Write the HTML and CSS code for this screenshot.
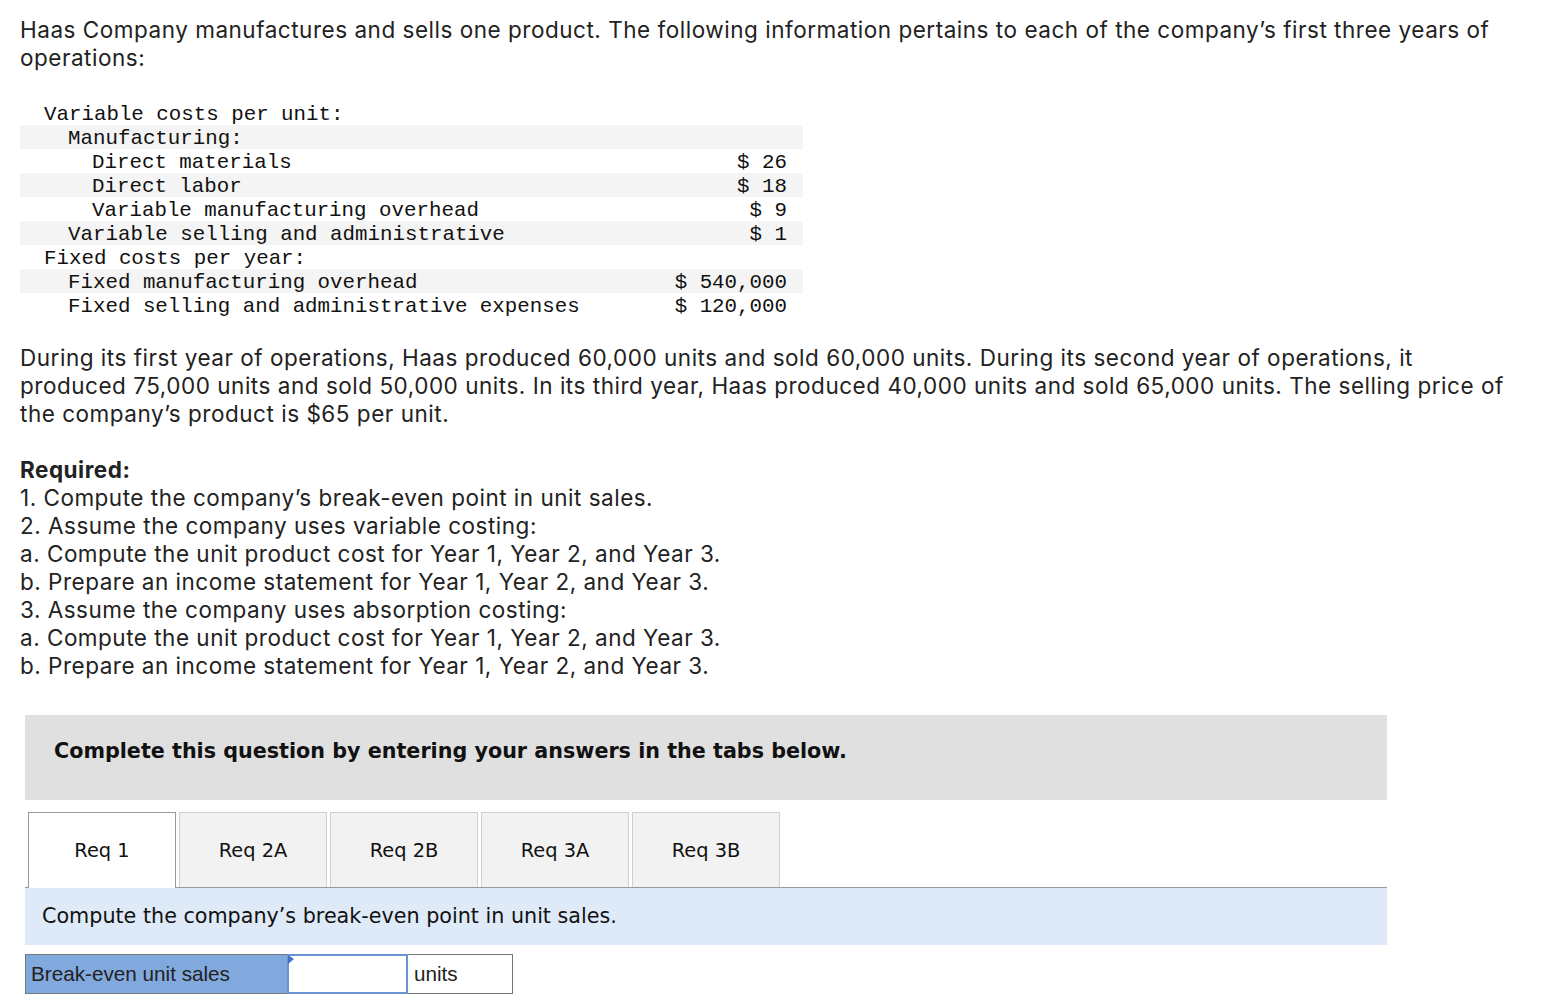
FILE: index.html
```html
<!DOCTYPE html>
<html>
<head>
<meta charset="utf-8">
<link rel="stylesheet" href="styles.css">
</head>
<body>
<div class="page">
  <p class="para">Haas Company manufactures and sells one product. The following information pertains to each of the company’s first three years of<br>operations:</p>

  <table class="costs">
    <tr><td class="l0">Variable costs per unit:</td><td class="val"></td></tr>
    <tr class="shade"><td class="l1">Manufacturing:</td><td class="val"></td></tr>
    <tr><td class="l2">Direct materials</td><td class="val">$ 26</td></tr>
    <tr class="shade"><td class="l2">Direct labor</td><td class="val">$ 18</td></tr>
    <tr><td class="l2">Variable manufacturing overhead</td><td class="val">$ 9</td></tr>
    <tr class="shade"><td class="l1">Variable selling and administrative</td><td class="val">$ 1</td></tr>
    <tr><td class="l0">Fixed costs per year:</td><td class="val"></td></tr>
    <tr class="shade"><td class="l1">Fixed manufacturing overhead</td><td class="val">$ 540,000</td></tr>
    <tr><td class="l1">Fixed selling and administrative expenses</td><td class="val">$ 120,000</td></tr>
  </table>

  <p class="para para2">During its first year of operations, Haas produced 60,000 units and sold 60,000 units. During its second year of operations, it<br>produced 75,000 units and sold 50,000 units. In its third year, Haas produced 40,000 units and sold 65,000 units. The selling price of<br>the company’s product is $65 per unit.</p>

  <div class="required">
    <div class="req-title">Required:</div>
    <div>1. Compute the company’s break-even point in unit sales.</div>
    <div>2. Assume the company uses variable costing:</div>
    <div>a. Compute the unit product cost for Year 1, Year 2, and Year 3.</div>
    <div>b. Prepare an income statement for Year 1, Year 2, and Year 3.</div>
    <div>3. Assume the company uses absorption costing:</div>
    <div>a. Compute the unit product cost for Year 1, Year 2, and Year 3.</div>
    <div>b. Prepare an income statement for Year 1, Year 2, and Year 3.</div>
  </div>

  <div class="instruct">Complete this question by entering your answers in the tabs below.</div>

  <div class="tabs">
    <div class="tab active">Req 1</div>
    <div class="tab">Req 2A</div>
    <div class="tab">Req 2B</div>
    <div class="tab">Req 3A</div>
    <div class="tab">Req 3B</div>
  </div>

  <div class="panel">Compute the company’s break-even point in unit sales.</div>

  <div class="answer">
    <div class="ans-label">Break-even unit sales</div>
    <div class="ans-input"><span class="flag"></span></div>
    <div class="ans-unit">units</div>
  </div>
</div>
</body>
</html>
```

FILE: styles.css
```css
html, body {
  margin: 0;
  padding: 0;
  background: #ffffff;
}
.page {
  padding: 16px 0 0 20px;
  color: #222;
  font-family: Inter, "Open Sans", sans-serif;
}
.para {
  margin: 0;
  font-size: 22.5px;
  letter-spacing: 0.52px;
  line-height: 28px;
  white-space: nowrap;
}
.costs {
  margin-top: 29px;
  border-collapse: collapse;
  width: 783px;
  font-family: "Liberation Mono", monospace;
  font-size: 20.8px;
  color: #111;
}
.costs td {
  height: 24px;
  box-sizing: border-box;
  padding: 3px 0 0;
  line-height: 21px;
  white-space: pre;
}
.costs .shade td {
  background: #f4f4f4;
}
.costs .l0 { padding-left: 24px; }
.costs .l1 { padding-left: 48px; }
.costs .l2 { padding-left: 72px; }
.costs .val {
  text-align: right;
  padding-right: 16px;
}
.para2 {
  margin-top: 27px;
}
.required {
  margin-top: 28px;
  font-size: 22.5px;
  letter-spacing: 0.5px;
  line-height: 28px;
}
.req-title {
  font-weight: bold;
}
.instruct {
  margin-top: 35px;
  margin-left: 5px;
  width: 1362px;
  height: 85px;
  box-sizing: border-box;
  background: #e0e0e0;
  padding: 24px 0 0 29px;
  font-family: "DejaVu Sans", Verdana, sans-serif;
  font-weight: bold;
  font-size: 20.7px;
  color: #111;
}
.tabs {
  margin-top: 12px;
  margin-left: 5px;
  width: 1362px;
  display: flex;
  gap: 3px;
  padding-left: 3px;
  box-sizing: border-box;
  border-bottom: 1px solid #999;
}
.tab {
  width: 148px;
  height: 75px;
  box-sizing: border-box;
  background: #f2f2f2;
  border: 1px solid #cfcfcf;
  border-bottom: none;
  display: flex;
  align-items: center;
  justify-content: center;
  font-family: "DejaVu Sans", Verdana, sans-serif;
  font-size: 19.4px;
  color: #111;
}
.tab.active {
  background: #fff;
  border-color: #999;
  margin-bottom: -1px;
  height: 76px;
}
.panel {
  margin-left: 5px;
  width: 1362px;
  height: 57px;
  box-sizing: border-box;
  background: #deeaf8;
  padding: 16px 0 0 17px;
  font-family: "DejaVu Sans", Verdana, sans-serif;
  font-size: 20.7px;
  color: #111;
}
.answer {
  margin-top: 9px;
  margin-left: 5px;
  display: flex;
  height: 40px;
  font-family: "Liberation Sans", Arial, sans-serif;
  font-size: 20.7px;
  color: #222;
}
.ans-label {
  width: 262px;
  box-sizing: border-box;
  background: #82a9de;
  border: 1px solid #777;
  border-right: none;
  padding: 7px 0 0 5px;
}
.ans-input {
  position: relative;
  width: 121px;
  box-sizing: border-box;
  background: #fff;
  border: 2px solid #6a93d3;
}
.flag {
  position: absolute;
  left: -1px;
  top: -1px;
  width: 0;
  height: 0;
  border-top: 4px solid transparent;
  border-bottom: 5px solid transparent;
  border-left: 6px solid #3f74c8;
}
.ans-unit {
  width: 105px;
  box-sizing: border-box;
  border: 1px solid #777;
  border-left: none;
  padding: 7px 0 0 6px;
}
```
